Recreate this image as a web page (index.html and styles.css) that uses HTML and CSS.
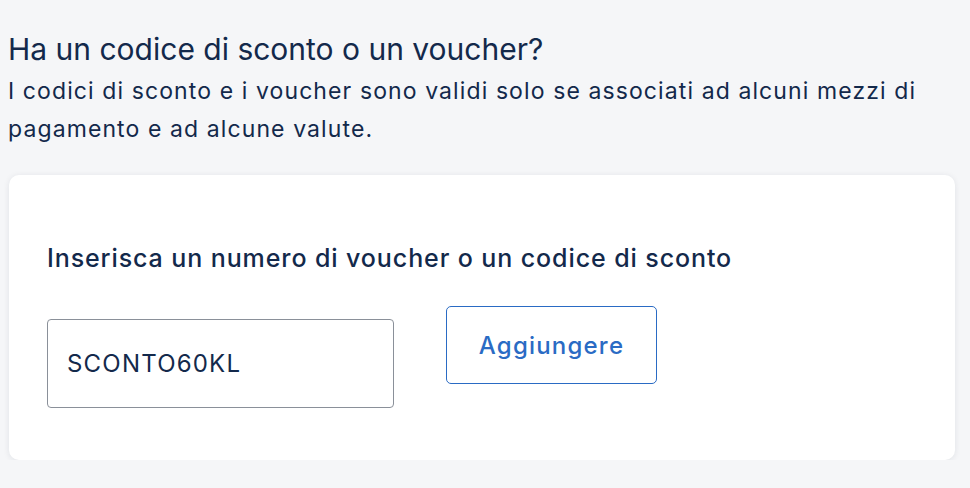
FILE: index.html
```html
<!DOCTYPE html>
<html lang="it">
<head>
<meta charset="utf-8">
<link rel="stylesheet" href="styles.css">
</head>
<body>
<section class="intro">
  <h2 class="title">Ha un codice di sconto o un voucher?</h2>
  <p class="desc">I codici di sconto e i voucher sono validi solo se associati ad alcuni mezzi di pagamento e ad alcune valute.</p>
</section>
<div class="card">
  <label class="label">Inserisca un numero di voucher o un codice di sconto</label>
  <div class="row">
    <div class="input">SCONTO60KL</div>
    <button class="btn" type="button">Aggiungere</button>
  </div>
</div>
</body>
</html>
```
FILE: styles.css
```css
html, body {
  margin: 0;
  padding: 0;
  background: #f5f6f8;
  font-family: Inter, "Noto Sans", sans-serif;
  color: #13294b;
}
body {
  padding: 31px 15px 0 8px;
  width: 970px;
  box-sizing: border-box;
}
.title {
  margin: 0;
  font-size: 30px;
  font-weight: 400;
  line-height: 36px;
}
.desc {
  margin: 5px 0 0;
  font-size: 23px;
  font-weight: 400;
  line-height: 38px;
  letter-spacing: 1.1px;
  width: 935px;
}
.card {
  margin: 27px 0 0 1px;
  background: #fff;
  border-radius: 10px;
  box-shadow: 0 1px 6px rgba(20, 30, 60, 0.09);
  padding: 67px 38px 0;
  height: 285px;
  box-sizing: border-box;
}
.label {
  display: block;
  font-size: 25px;
  font-weight: 500;
  line-height: 32px;
  letter-spacing: 0.9px;
  white-space: nowrap;
}
.row {
  display: flex;
  align-items: flex-start;
  gap: 52px;
  margin-top: 32px;
}
.input {
  width: 347px;
  height: 89px;
  box-sizing: border-box;
  border: 1px solid #8a9099;
  border-radius: 4px;
  margin-top: 13px;
  padding: 0 19px;
  display: flex;
  align-items: center;
  font-size: 24px;
  letter-spacing: 1.2px;
}
.btn {
  width: 211px;
  height: 78px;
  box-sizing: border-box;
  background: #fff;
  border: 1px solid #2a6bc4;
  border-radius: 5px;
  color: #2a6bc4;
  font-family: Inter, "Noto Sans", sans-serif;
  font-size: 24px;
  font-weight: 500;
  letter-spacing: 1.2px;
  padding: 0;
}
```
